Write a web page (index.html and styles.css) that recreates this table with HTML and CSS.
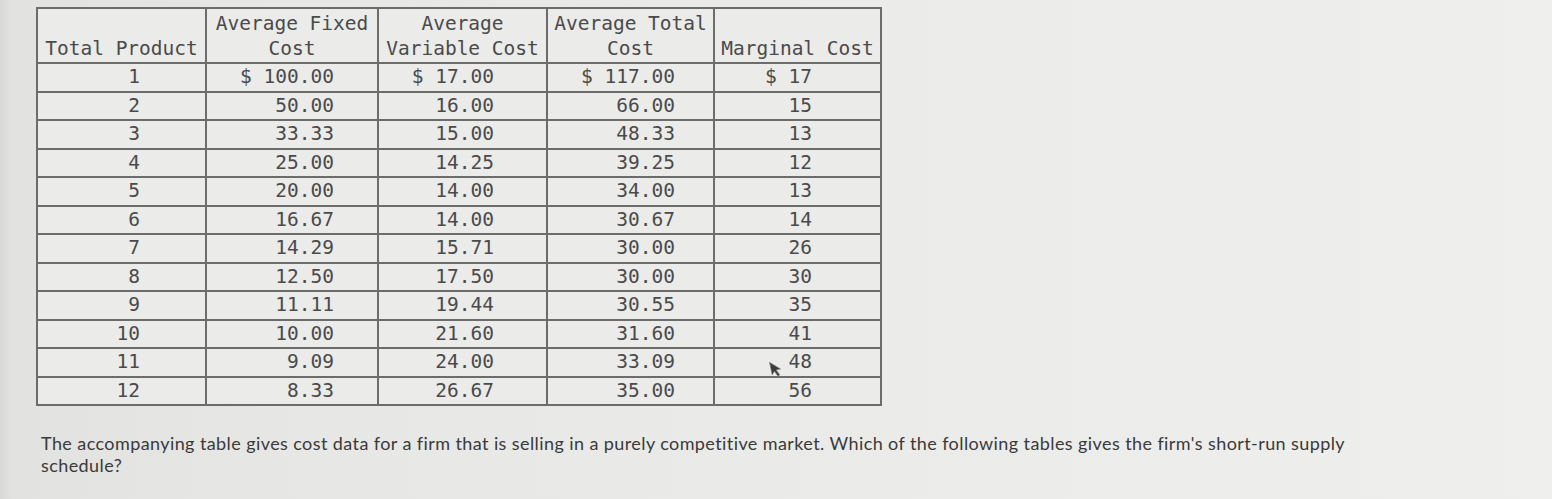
FILE: index.html
```html
<!DOCTYPE html>
<html lang="en">
<head>
<meta charset="utf-8">
<title>Cost data</title>
<link rel="stylesheet" href="styles.css">
</head>
<body>
<main class="page">
  <div class="table-wrap">
    <table class="sheet">
      <colgroup>
        <col class="c1"><col class="c2"><col class="c3"><col class="c4"><col class="c5">
      </colgroup>
      <thead>
        <tr>
          <th>Total Product</th>
          <th>Average Fixed<br>Cost</th>
          <th>Average<br>Variable Cost</th>
          <th>Average Total<br>Cost</th>
          <th>Marginal Cost</th>
        </tr>
      </thead>
      <tbody>
        <tr><td class="q">1</td><td class="afc">$ 100.00</td><td class="avc">$ 17.00</td><td class="atc">$ 117.00</td><td class="mc">$ 17</td></tr>
        <tr><td class="q">2</td><td class="afc">50.00</td><td class="avc">16.00</td><td class="atc">66.00</td><td class="mc">15</td></tr>
        <tr><td class="q">3</td><td class="afc">33.33</td><td class="avc">15.00</td><td class="atc">48.33</td><td class="mc">13</td></tr>
        <tr><td class="q">4</td><td class="afc">25.00</td><td class="avc">14.25</td><td class="atc">39.25</td><td class="mc">12</td></tr>
        <tr><td class="q">5</td><td class="afc">20.00</td><td class="avc">14.00</td><td class="atc">34.00</td><td class="mc">13</td></tr>
        <tr><td class="q">6</td><td class="afc">16.67</td><td class="avc">14.00</td><td class="atc">30.67</td><td class="mc">14</td></tr>
        <tr><td class="q">7</td><td class="afc">14.29</td><td class="avc">15.71</td><td class="atc">30.00</td><td class="mc">26</td></tr>
        <tr><td class="q">8</td><td class="afc">12.50</td><td class="avc">17.50</td><td class="atc">30.00</td><td class="mc">30</td></tr>
        <tr><td class="q">9</td><td class="afc">11.11</td><td class="avc">19.44</td><td class="atc">30.55</td><td class="mc">35</td></tr>
        <tr><td class="q">10</td><td class="afc">10.00</td><td class="avc">21.60</td><td class="atc">31.60</td><td class="mc">41</td></tr>
        <tr><td class="q">11</td><td class="afc">9.09</td><td class="avc">24.00</td><td class="atc">33.09</td><td class="mc">48</td></tr>
        <tr><td class="q">12</td><td class="afc">8.33</td><td class="avc">26.67</td><td class="atc">35.00</td><td class="mc">56</td></tr>
      </tbody>
    </table>
    <svg class="cursor" width="12" height="18" viewBox="0 0 12 18" aria-hidden="true">
      <path d="M1 1 L1 14 L4 11 L6.5 16.5 L8.5 15.5 L6 10 L10.5 10 Z" fill="#3c3c3c" stroke="#8a8a8a" stroke-width="0.6"/>
    </svg>
  </div>
  <p class="question">The accompanying table gives cost data for a firm that is selling in a purely competitive market. Which of the following tables gives the firm's short-run supply schedule?</p>
</main>
</body>
</html>
```

FILE: styles.css
```css
html, body {
  margin: 0;
  padding: 0;
}

body {
  width: 1552px;
  height: 499px;
  overflow: hidden;
  background: linear-gradient(90deg, #d9d9d7 0px, #e2e2e0 12px, #e7e7e5 300px, #ebebea 900px, #efefee 1552px);
}

.page {
  padding: 7px 0 0 36px;
}

.table-wrap {
  position: relative;
  width: 844px;
}

.sheet {
  border-collapse: collapse;
  table-layout: fixed;
  width: 844px;
  background: #ebebea;
  font-family: "DejaVu Sans Mono", "Liberation Mono", monospace;
  font-size: 19.5px;
  color: #4a4a4a;
}

.c1 { width: 169px; }
.c2 { width: 172px; }
.c3 { width: 169px; }
.c4 { width: 167px; }
.c5 { width: 167px; }

.sheet th,
.sheet td {
  border: 2px solid #6c6c6c;
  padding: 0;
  white-space: nowrap;
}

.sheet th {
  font-weight: normal;
  text-align: center;
  vertical-align: bottom;
  line-height: 25px;
  height: 52px;
  padding-bottom: 1px;
}

.sheet td {
  height: 26.5px;
  line-height: 26px;
  text-align: right;
}

.sheet .q { padding-right: 65px; }
.sheet .afc { padding-right: 43px; }
.sheet .avc { padding-right: 52px; }
.sheet .atc { padding-right: 38px; }
.sheet .mc { padding-right: 68px; }

.cursor {
  position: absolute;
  left: 734px;
  top: 353px;
  transform: rotate(-12deg);
}

.question {
  margin: 26px 0 0 5px;
  width: 1330px;
  font-family: Lato, "Open Sans", sans-serif;
  font-size: 18px;
  letter-spacing: 0.41px;
  line-height: 22px;
  color: #3a3a3a;
}
```
